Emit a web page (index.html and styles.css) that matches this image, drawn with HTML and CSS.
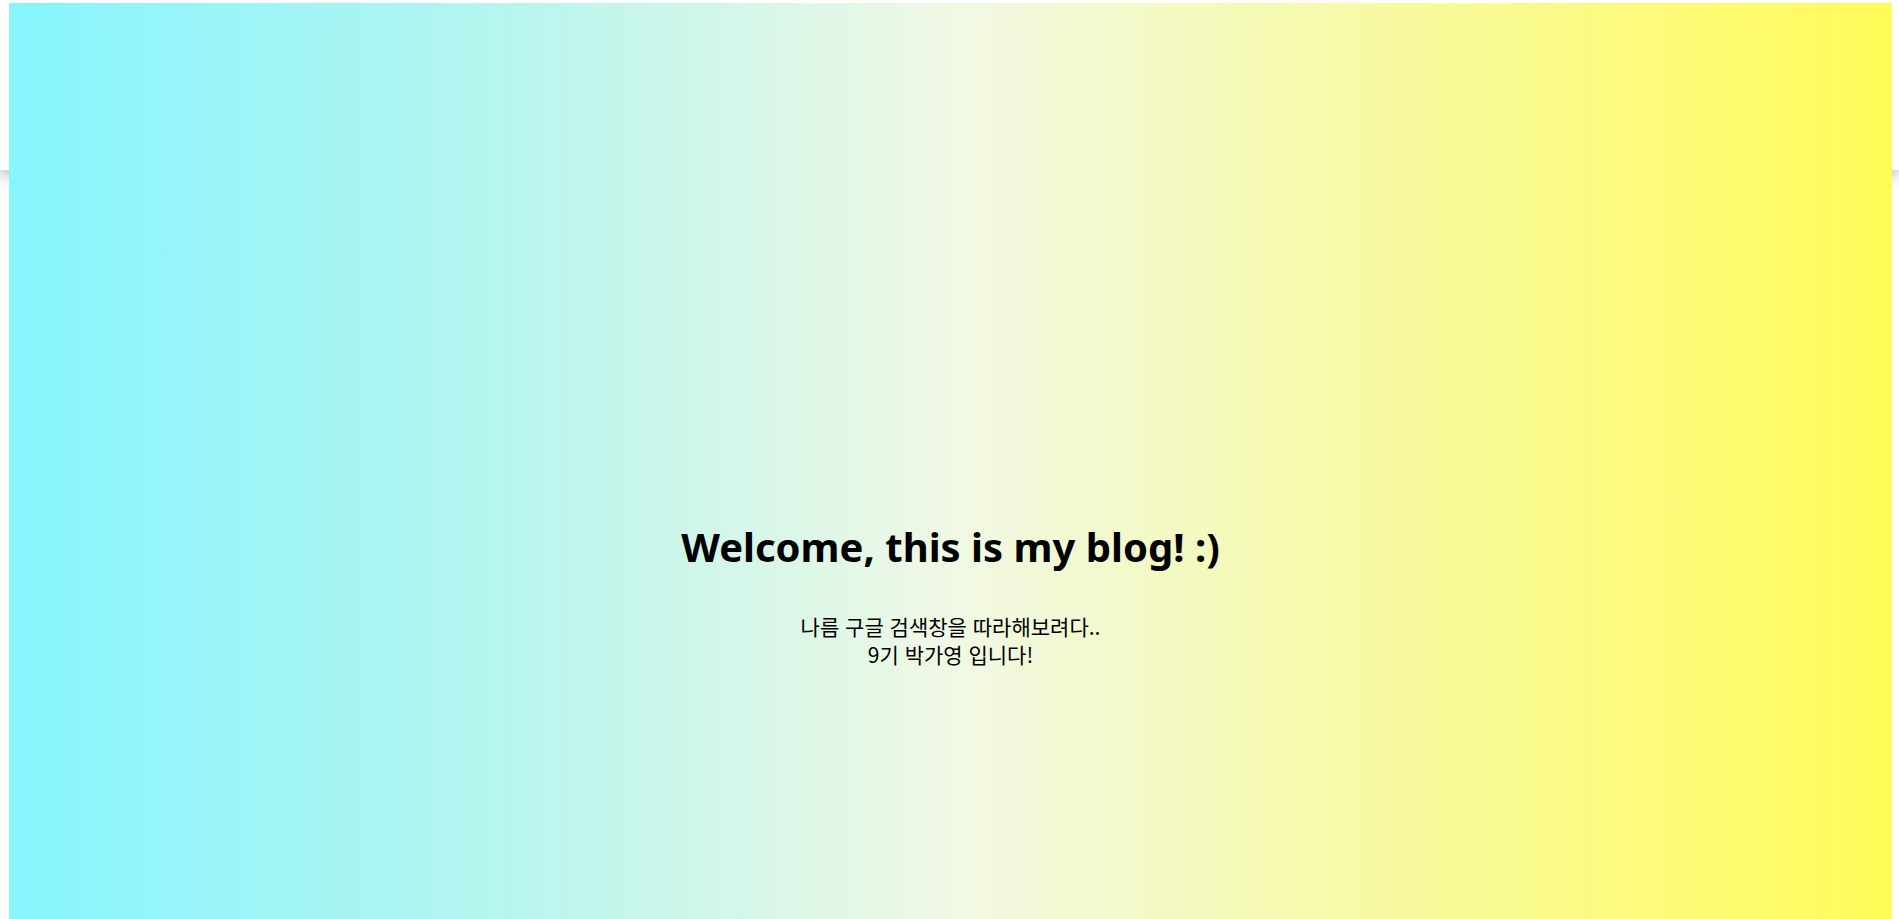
FILE: index.html
```
<!DOCTYPE html>
<html lang="ko">
<head>
<meta charset="utf-8">
<title>blog</title>
<link rel="stylesheet" href="styles.css">
</head>
<body>
<header class="topbar"></header>
<main class="hero">
  <h1 class="hero-title">Welcome, this is my blog! :)</h1>
  <p class="hero-text">나름 구글 검색창을 따라해보려다..<br>9기 박가영 입니다!</p>
</main>
</body>
</html>
```
FILE: styles.css
```
html, body {
  margin: 0;
  padding: 0;
  background: #ffffff;
  overflow: hidden;
}
body {
  font-family: "Noto Sans", "Noto Sans CJK KR", sans-serif;
  color: #000;
}
.topbar {
  height: 170px;
  background: #ffffff;
  box-shadow: 0 4px 16px rgba(0, 0, 0, 0.32);
}
.hero {
  position: relative;
  margin: -167px 7px 0 9px;
  height: calc(100vh - 3px);
  box-sizing: border-box;
  padding-top: 516px;
  background: linear-gradient(to right, #86f5fe 0%, #b3f5ef 25%, #f0f8e4 50%, #f8fa9c 75%, #fffb58 100%);
  display: flex;
  flex-direction: column;
  align-items: center;
  text-align: center;
}
.hero-title {
  margin: 0;
  font-size: 40px;
  line-height: 56px;
  font-weight: 700;
}
.hero-text {
  margin: 37px 0 0;
  font-family: "Noto Sans CJK KR", sans-serif;
  font-size: 21px;
  line-height: 28px;
}
```
